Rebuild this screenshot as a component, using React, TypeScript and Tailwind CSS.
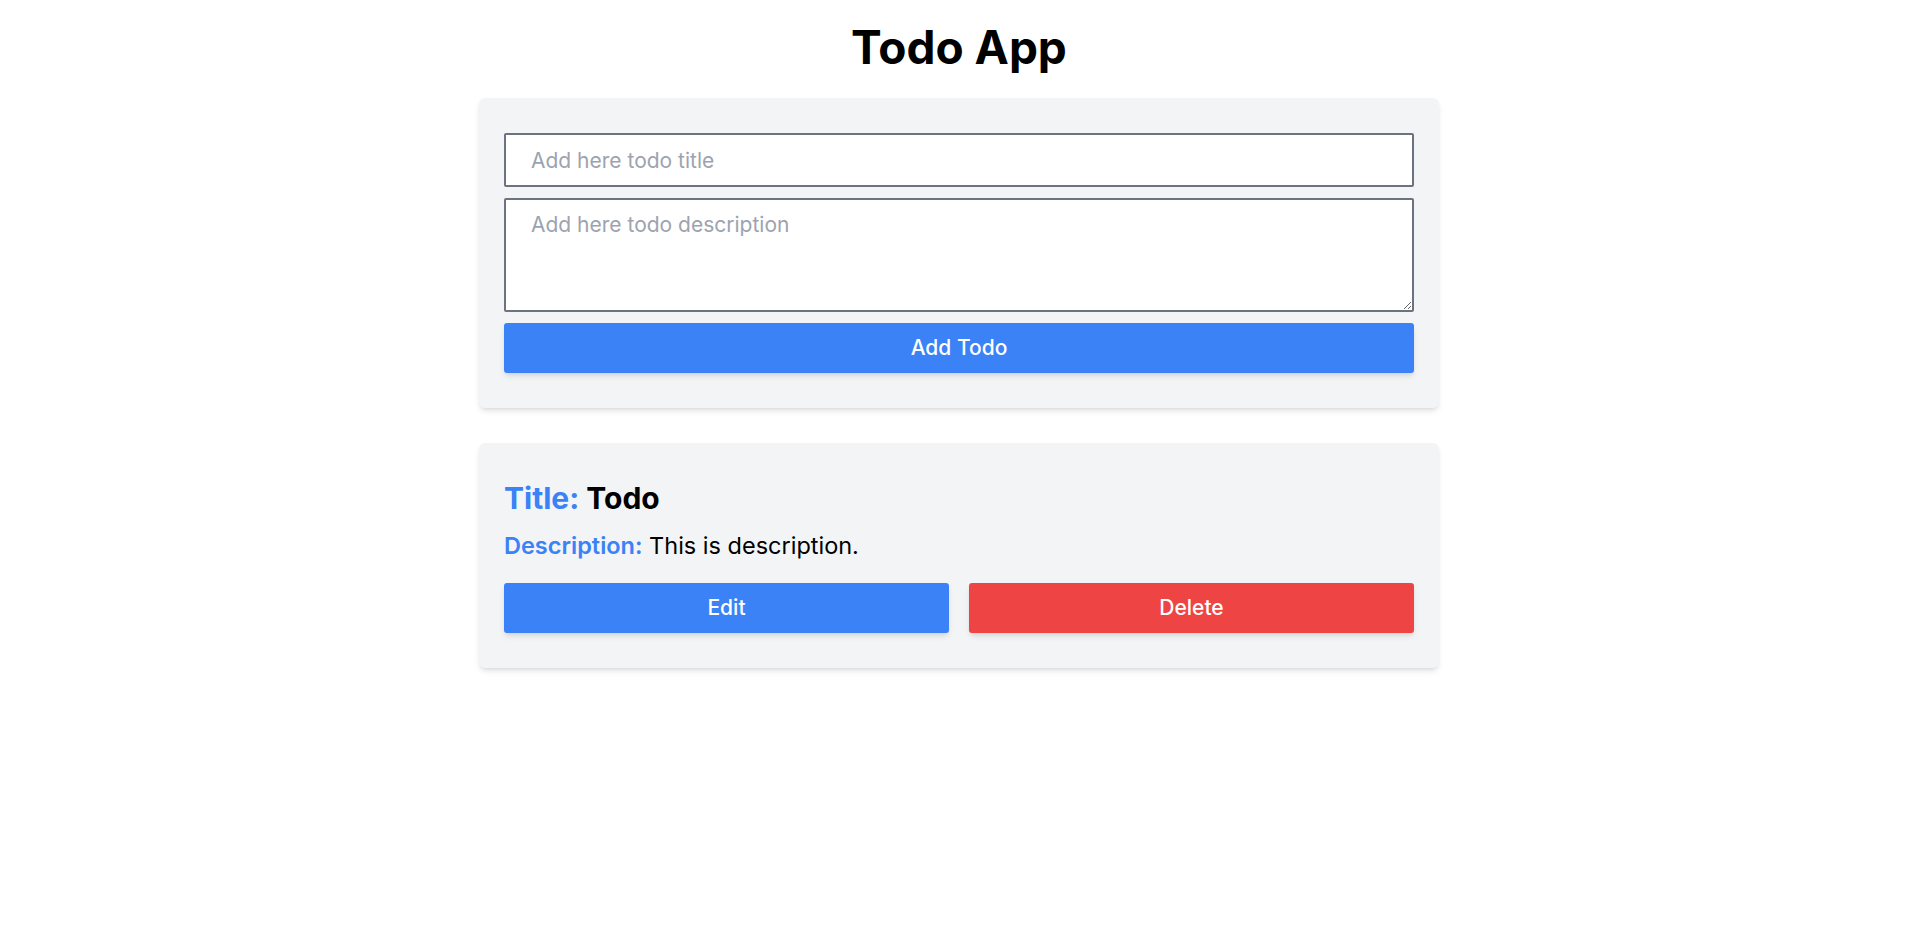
import { useState } from 'react';

interface Todo {
  id: number;
  title: string;
  description: string;
}

export default function App() {
  const [title, setTitle] = useState('');
  const [description, setDescription] = useState('');
  const [todos, setTodos] = useState<Todo[]>([
    { id: 1, title: 'Todo', description: 'This is description.' }
  ]);

  const addTodo = () => {
    if (!title.trim()) return;
    setTodos([...todos, { id: Date.now(), title, description }]);
    setTitle('');
    setDescription('');
  };

  const deleteTodo = (id: number) => {
    setTodos(todos.filter((t) => t.id !== id));
  };

  return (
    <div className="min-h-screen bg-white text-black font-['Inter','Noto_Sans',sans-serif]">
      <h1 className="text-center text-[46px] leading-[50px] font-bold pt-[22px] mb-[26px]">Todo App</h1>

      <div className="w-[960px] mx-auto bg-[#f3f4f6] rounded-md shadow-md px-[25px] py-[35px]">
        <input
          type="text"
          value={title}
          onChange={(e) => setTitle(e.target.value)}
          placeholder="Add here todo title"
          className="block w-full h-[54px] mb-[11px] border-2 border-[#6b7280] rounded-[2px] bg-white px-[25px] py-[10px] text-[21px] leading-[30px] outline-none placeholder:text-[#9ca3af]"
        />
        <textarea
          value={description}
          onChange={(e) => setDescription(e.target.value)}
          placeholder="Add here todo description"
          rows={3}
          className="block w-full h-[114px] mb-[11px] border-2 border-[#6b7280] rounded-[2px] bg-white px-[25px] py-[10px] text-[21px] leading-[30px] outline-none placeholder:text-[#9ca3af]"
        />
        <button
          onClick={addTodo}
          className="block w-full h-[50px] bg-[#3b82f6] text-white text-[21px] font-medium rounded-[3px] shadow-md"
        >
          Add Todo
        </button>
      </div>

      {todos.map((todo) => (
        <div key={todo.id} className="w-[960px] mx-auto mt-[35px] bg-[#f3f4f6] rounded-md shadow-md px-[25px] py-[35px]">
          <h2 className="text-[30px] leading-[40px] font-bold mb-[10px]">
            <span className="text-[#3b82f6]">Title:</span> {todo.title}
          </h2>
          <p className="text-[23.5px] leading-[35px] mb-[20px]">
            <span className="text-[#3b82f6] font-semibold">Description:</span> {todo.description}
          </p>
          <div className="grid grid-cols-2 gap-5">
            <button className="h-[50px] bg-[#3b82f6] text-white text-[21px] font-medium rounded-[3px] shadow-md">Edit</button>
            <button
              onClick={() => deleteTodo(todo.id)}
              className="h-[50px] bg-[#ef4444] text-white text-[21px] font-medium rounded-[3px] shadow-md"
            >
              Delete
            </button>
          </div>
        </div>
      ))}
    </div>
  );
}
